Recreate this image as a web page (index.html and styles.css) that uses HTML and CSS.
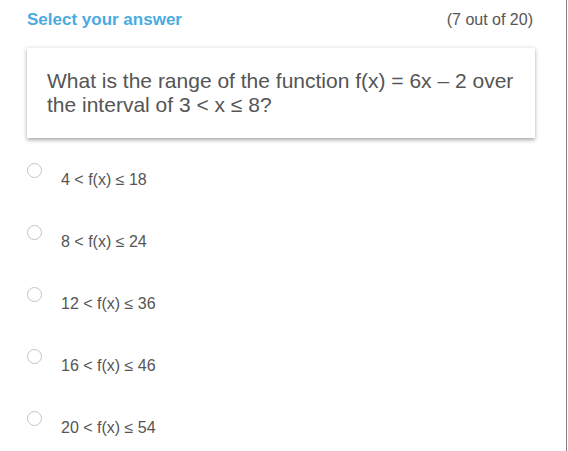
FILE: index.html
```html
<!DOCTYPE html>
<html lang="en">
<head>
    <meta charset="UTF-8">
    <title>Question 7</title>
    <link rel="stylesheet" href="styles.css">
</head>
<body>
    <div class="page">
        <div class="header">
            <span class="prompt">Select your answer</span>
            <span class="counter">(7 out of 20)</span>
        </div>

        <div class="question">
            What is the range of the function f(x) = 6x &ndash; 2 over the interval of 3 &lt; x &le; 8?
        </div>

        <ul class="options">
            <li class="option"><span class="radio"></span><span class="label">4 &lt; f(x) &le; 18</span></li>
            <li class="option"><span class="radio"></span><span class="label">8 &lt; f(x) &le; 24</span></li>
            <li class="option"><span class="radio"></span><span class="label">12 &lt; f(x) &le; 36</span></li>
            <li class="option"><span class="radio"></span><span class="label">16 &lt; f(x) &le; 46</span></li>
            <li class="option"><span class="radio"></span><span class="label">20 &lt; f(x) &le; 54</span></li>
        </ul>
    </div>
</body>
</html>
```

FILE: styles.css
```css
body {
    font-family: "Liberation Sans", Arial, sans-serif;
    margin: 0;
    padding: 0;
    background-color: #ffffff;
    color: #555555;
}

.page {
    width: 567px;
    height: 451px;
    box-sizing: border-box;
    border-right: 1px solid #808080;
    padding: 10px 31px 0 27px;
    overflow: hidden;
}

.header {
    display: flex;
    justify-content: space-between;
    align-items: center;
    height: 20px;
    padding-right: 2px;
}

.prompt {
    font-size: 17px;
    font-weight: bold;
    color: #4aabdf;
}

.counter {
    font-size: 16px;
}

.question {
    margin-top: 17px;
    padding: 21px 20px;
    font-size: 21px;
    line-height: 24px;
    background-color: #fff;
    border-top: 1px solid #f0f0f0;
    box-shadow: 0 2px 4px rgba(0, 0, 0, 0.35);
}

.options {
    list-style: none;
    margin: 25px 0 0 0;
    padding: 0;
}

.option {
    display: flex;
    align-items: flex-start;
    gap: 19px;
    height: 62px;
}

.radio {
    width: 15px;
    height: 15px;
    box-sizing: border-box;
    border: 1px solid #c4c4c4;
    border-radius: 50%;
    flex-shrink: 0;
}

.label {
    font-size: 16px;
    line-height: 18px;
    padding-top: 8px;
}
```
